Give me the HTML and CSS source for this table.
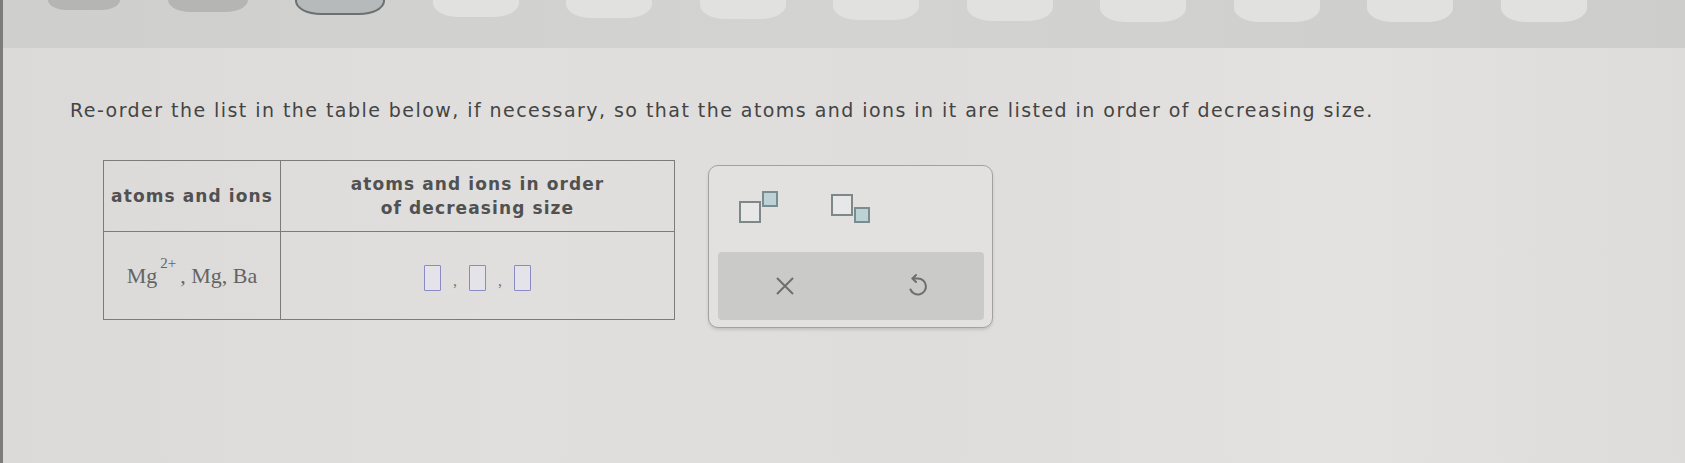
FILE: index.html
```html
<!DOCTYPE html>
<html lang="en">
<head>
<meta charset="utf-8">
<title>Re-order atoms and ions</title>
<link rel="stylesheet" href="styles.css">
</head>
<body>
<div class="screen">
  <div class="topbar">
    <div class="tab tab-done t1"></div>
    <div class="tab tab-done t2"></div>
    <div class="tab tab-current t3"></div>
    <div class="tab t4"></div>
    <div class="tab t5"></div>
    <div class="tab t6"></div>
    <div class="tab t7"></div>
    <div class="tab t8"></div>
    <div class="tab t9"></div>
    <div class="tab t10"></div>
    <div class="tab t11"></div>
    <div class="tab t12"></div>
  </div>
  <main class="content">
    <p class="prompt">Re-order the list in the table below, if necessary, so that the atoms and ions in it are listed in order of decreasing size.</p>
    <div class="work">
      <table class="grid">
        <tr class="head">
          <th class="c1">atoms and ions</th>
          <th class="c2">atoms and ions in order<br>of decreasing size</th>
        </tr>
        <tr class="body">
          <td class="c1 species">Mg<sup>2+</sup>, Mg, Ba</td>
          <td class="c2">
            <div class="answers">
              <span class="slot"></span><span class="comma">,</span>
              <span class="slot"></span><span class="comma">,</span>
              <span class="slot"></span>
            </div>
          </td>
        </tr>
      </table>
      <div class="panel">
        <div class="tools">
          <svg class="tool" width="40" height="32" viewBox="0 0 40 32" aria-label="superscript">
            <rect x="1" y="11" width="20" height="20" fill="#e6e7e6" stroke="#7f8888" stroke-width="2"/>
            <rect x="24" y="1" width="14" height="14" fill="#bcd2d6" stroke="#7a8c8e" stroke-width="2"/>
          </svg>
          <svg class="tool tool-sub" width="40" height="30" viewBox="0 0 40 30" aria-label="subscript">
            <rect x="1" y="1" width="20" height="20" fill="#e6e7e6" stroke="#7f8888" stroke-width="2"/>
            <rect x="24" y="14" width="14" height="14" fill="#bcd2d6" stroke="#7a8c8e" stroke-width="2"/>
          </svg>
        </div>
        <div class="actions">
          <button class="act" aria-label="clear">
            <svg width="20" height="20" viewBox="0 0 20 20"><path d="M2 2 L18 18 M18 2 L2 18" stroke="#6e6e6e" stroke-width="2" fill="none"/></svg>
          </button>
          <button class="act" aria-label="undo">
            <svg width="20" height="26" viewBox="0 0 20 26"><path d="M8 2 L4.5 5.5 L8 9" stroke="#6e6e6e" stroke-width="2" fill="none" stroke-linejoin="round" stroke-linecap="round"/><path d="M4.5 5.5 H10 A8 8 0 1 1 2.5 16.5" stroke="#6e6e6e" stroke-width="2" fill="none" stroke-linecap="round"/></svg>
          </button>
        </div>
      </div>
    </div>
  </main>
</div>
</body>
</html>
```

FILE: styles.css
```css
* { box-sizing: border-box; }

html, body {
  margin: 0;
  padding: 0;
}

body {
  width: 1685px;
  height: 463px;
  overflow: hidden;
  font-family: "DejaVu Sans", Verdana, sans-serif;
  background: #dcdbd9;
}

.screen {
  height: 463px;
  border-left: 3px solid #7c7c7a;
  background: linear-gradient(90deg, #dbdad8 0%, #e0dfdd 30%, #dedddb 55%, #e3e2e0 80%, #dddcda 100%);
}

.topbar {
  height: 48px;
  background: linear-gradient(90deg, #cfcfcd 0%, #d3d3d1 50%, #cdcdcb 100%);
  display: flex;
  align-items: flex-start;
  gap: 47.5px;
  padding-left: 45px;
}

.tab {
  width: 86px;
  height: 20px;
  background: #e1e1e0;
  border-radius: 0 0 26px 26px / 0 0 14px 14px;
  flex: none;
}

.tab-done { background: #b5b6b4; }
.tab-current {
  background: #b6baba;
  border: 2px solid #697171;
  border-top: none;
}
.t1 { height: 10px; width: 72px; }
.t2 { height: 12px; width: 80px; }
.t3 { height: 15px; width: 90px; }
.t4 { height: 17px; }
.t5 { height: 18px; }
.t6 { height: 19px; }
.t7 { height: 20px; }
.t8 { height: 21px; }
.t9, .t10, .t11, .t12 { height: 22px; }

.content {
  padding: 51px 0 0 67px;
}

.prompt {
  margin: 0;
  font-size: 19px;
  line-height: 22px;
  color: #444;
  letter-spacing: 1.45px;
}

.work {
  display: flex;
  align-items: flex-start;
  margin-top: 39px;
  margin-left: 33px;
}

.grid {
  border-collapse: collapse;
  color: #5a5a5a;
}

.grid th, .grid td {
  border: 1.5px solid #7b7b7b;
  padding: 0;
  text-align: center;
  vertical-align: middle;
}

.grid .c1 { width: 177px; }
.grid .c2 { width: 394px; }

.head th {
  height: 71px;
  font-weight: bold;
  font-size: 17px;
  line-height: 24px;
  color: #515151;
  letter-spacing: 1.1px;
}

.body td { height: 88px; }

.species {
  font-family: "Liberation Serif", "Times New Roman", serif;
  font-size: 22px;
  color: #646464;
}

.species sup {
  font-size: 15px;
  position: relative;
  top: -15px;
  margin: 0 4px 0 3px;
  vertical-align: baseline;
  line-height: 0;
}

.answers {
  display: flex;
  justify-content: center;
  align-items: center;
  padding-top: 5px;
}

.slot {
  width: 17px;
  height: 26px;
  border: 1.5px solid #8a8ac4;
  background: #e4e3ea;
  border-radius: 1px;
}

.comma {
  width: 28px;
  text-align: center;
  font-size: 16px;
  color: #777;
  line-height: 12px;
  padding-top: 6px;
  font-family: "Liberation Serif", serif;
}

.panel {
  margin-left: 33px;
  margin-top: 5px;
  width: 285px;
  height: 163px;
  border: 1.5px solid #a2a2a2;
  border-radius: 10px;
  background: #e2e1df;
  box-shadow: 0 2px 3px rgba(0, 0, 0, 0.12);
  display: flex;
  flex-direction: column;
  padding: 0 8px 7px 9px;
}

.tools {
  display: flex;
  align-items: flex-start;
  gap: 52px;
  padding: 25px 0 0 21px;
  height: 86px;
}

.tool-sub { margin-top: 3px; }

.actions {
  flex: 1;
  background: #cacac9;
  border-radius: 4px;
  display: grid;
  grid-template-columns: 1fr 1fr;
  align-items: center;
  justify-items: center;
}

.act {
  border: none;
  background: transparent;
  padding: 0;
  display: flex;
  align-items: center;
  justify-content: center;
  width: 40px;
  height: 40px;
}
```
